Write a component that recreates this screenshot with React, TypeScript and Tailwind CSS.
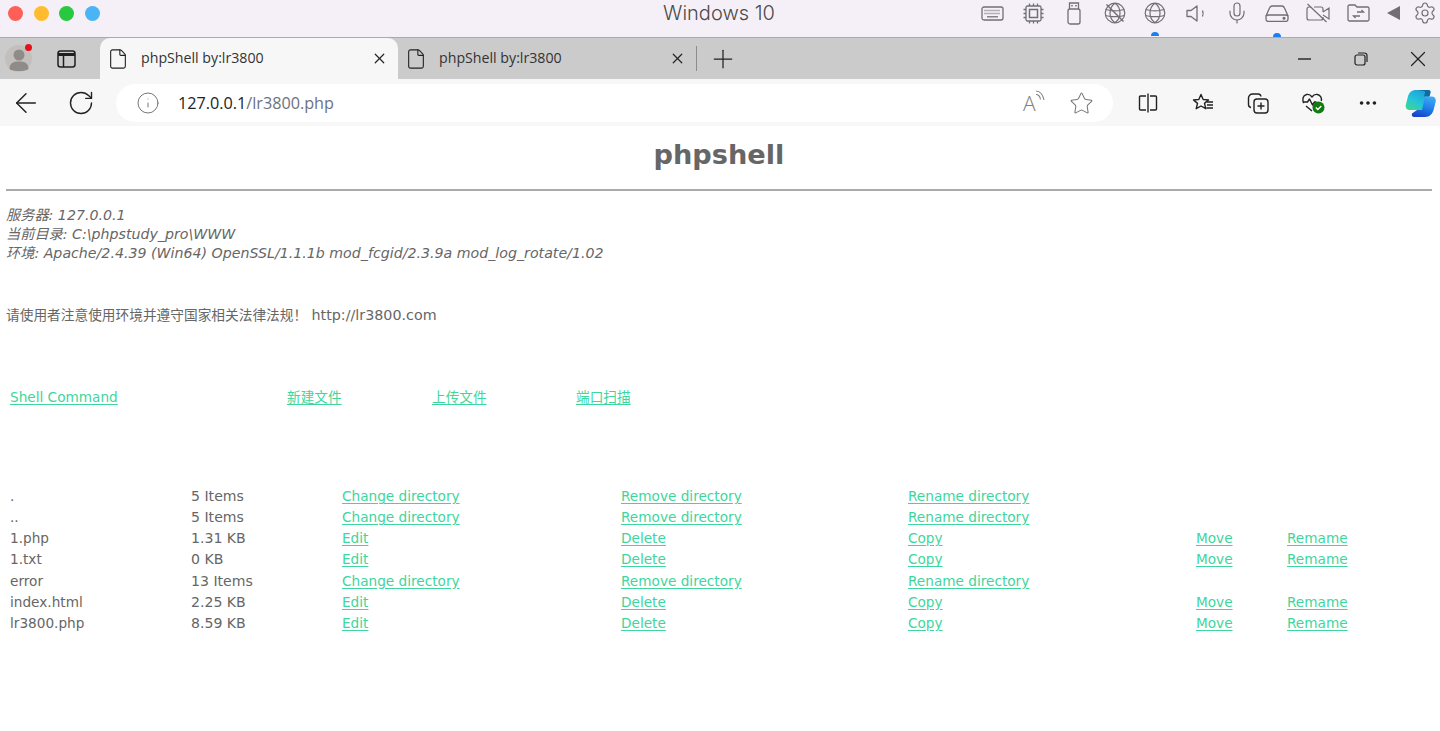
import {
  ArrowLeft,
  File,
  Info,
  Mic,
  MoreHorizontal,
  Plus,
  RotateCw,
  Settings,
  Star,
  X,
} from "lucide-react";

const pageFont = "font-['DejaVu_Sans','Noto_Sans_CJK_SC',sans-serif]";
const chromeFont = "font-['Open_Sans','Noto_Sans',sans-serif]";
const macGray = "#716e74";

type Row = { name: string; size: string; dir: boolean };

const rows: Row[] = [
  { name: ".", size: "5 Items", dir: true },
  { name: "..", size: "5 Items", dir: true },
  { name: "1.php", size: "1.31 KB", dir: false },
  { name: "1.txt", size: "0 KB", dir: false },
  { name: "error", size: "13 Items", dir: true },
  { name: "index.html", size: "2.25 KB", dir: false },
  { name: "lr3800.php", size: "8.59 KB", dir: false },
];

function Link({ children }: { children: React.ReactNode }) {
  return <a className="text-[#3ed69d] underline underline-offset-2">{children}</a>;
}

function KeyboardIcon() {
  return (
    <svg width="23" height="15" viewBox="0 0 23 15" fill="none" stroke={macGray} strokeWidth="1.300">
      <rect x="1" y="1" width="21" height="13" rx="2" />
      <path d="M3.500 4.500h16M3.500 7.500h16" strokeWidth="1.500" strokeDasharray="1 1" />
      <path d="M6 10.800h11" strokeWidth="1.300" />
    </svg>
  );
}

function CpuIcon() {
  return (
    <svg width="21" height="21" viewBox="0 0 21 21" fill="none" stroke={macGray} strokeWidth="1.300">
      <rect x="3" y="3" width="15" height="15" rx="1.500" />
      <rect x="6.500" y="6.500" width="8" height="8" strokeWidth="1.500" />
      <path d="M6.500 0.500v2.500M10.500 0.500v2.500M14.500 0.500v2.500M6.500 18v2.500M10.500 18v2.500M14.500 18v2.500M0.500 6.500h2.500M0.500 10.500h2.500M0.500 14.500h2.500M18 6.500h2.500M18 10.500h2.500M18 14.500h2.500" />
    </svg>
  );
}

function UsbStick() {
  return (
    <svg width="14" height="23" viewBox="0 0 14 23" fill="none" stroke={macGray} strokeWidth="1.300">
      <rect x="1" y="7" width="12" height="15" rx="2" />
      <path d="M2.500 7V1h9v6" />
      <path d="M5 3v1.500M9 3v1.500" strokeWidth="1.500" />
    </svg>
  );
}

function GlobeLines() {
  return (
    <>
      <circle cx="11" cy="11" r="9.800" />
      <path d="M11 1.200C7 4 6 8 6 11s1 7 5 9.800M11 1.200c4 2.800 5 6.800 5 9.800s-1 7-5 9.800M2 7.500c5 1.500 13 1.500 18 0M1.500 13.500c6 1.500 13 1.500 19 0" />
    </>
  );
}

function GlobeIcon({ off }: { off?: boolean }) {
  return (
    <svg width="22" height="22" viewBox="0 0 22 22" fill="none" stroke={macGray} strokeWidth="1.200">
      <GlobeLines />
      {off && <path d="M2.500 2.500l17 17" strokeWidth="1.500" />}
    </svg>
  );
}

function SpeakerIcon() {
  return (
    <svg width="19" height="17" viewBox="0 0 19 17" fill="none" stroke={macGray} strokeWidth="1.300" strokeLinejoin="round">
      <path d="M1 5.500h4L11 1v15l-6-4.500H1z" />
      <path d="M16.500 5.500c.8 2 .8 4 0 6" />
    </svg>
  );
}

function DriveIcon() {
  return (
    <svg width="24" height="17" viewBox="0 0 24 17" fill="none" stroke={macGray} strokeWidth="1.300">
      <path d="M1 11L4.500 3A3 3 0 0 1 7.300 1h9.400a3 3 0 0 1 2.800 2L23 11v3a2.500 2.500 0 0 1-2.500 2.500h-17A2.500 2.500 0 0 1 1 14z" />
      <path d="M1 11c1-1 1.500-1 2.500-1h17c1 0 1.500 0 2.500 1" />
      <circle cx="19" cy="13.300" r="0.900" fill={macGray} />
    </svg>
  );
}

function VideoOffIcon() {
  return (
    <svg width="24" height="20" viewBox="0 0 24 20" fill="none" stroke={macGray} strokeWidth="1.200">
      <path d="M5 4H3A2 2 0 0 0 1 6v9a2 2 0 0 0 2 2h12a2 2 0 0 0 2-2v-1M8 4h7a2 2 0 0 1 2 2v3M17 9l6-4v11l-6-4" />
      <path d="M1.500 1l19 18" />
    </svg>
  );
}

function TransferFolder() {
  return (
    <svg width="23" height="18" viewBox="0 0 23 18" fill="none" stroke={macGray} strokeWidth="1.300">
      <path d="M1 2.500A1.500 1.500 0 0 1 2.500 1H8l2 2h10.500A1.500 1.500 0 0 1 22 4.500V15.500a1.500 1.500 0 0 1-1.500 1.500h-18A1.500 1.500 0 0 1 1 15.500z" />
      <path d="M10 8h6.500l-2-2M13 12H6.500l2 2" />
    </svg>
  );
}

function SplitScreen() {
  return (
    <svg width="20" height="20" viewBox="0 0 20 20" fill="none" stroke="#222" strokeWidth="1.400">
      <path d="M8 3H2.500A1 1 0 0 0 1.500 4v12a1 1 0 0 0 1 1H8M12 3h5.500a1 1 0 0 1 1 1v12a1 1 0 0 1-1 1H12M10 0.500v19" />
    </svg>
  );
}

function Favorites() {
  return (
    <svg width="22" height="20" viewBox="0 0 22 20" fill="none" stroke="#222" strokeWidth="1.400" strokeLinejoin="round">
      <path d="M9 1.500l2.200 5 5.300.4-4 3.500 1.300 5.300L9 13l-4.800 2.700 1.300-5.300-4-3.500 5.300-.4z" />
      <path d="M15 9h6M15 12h6M14.500 15h6.500" />
    </svg>
  );
}

function Collections() {
  return (
    <svg width="22" height="22" viewBox="0 0 22 22" fill="none" stroke="#222" strokeWidth="1.400">
      <rect x="7" y="7" width="14" height="14" rx="3" />
      <path d="M14 10.500v7M10.500 14h7" />
      <path d="M4 15.500A3 3 0 0 1 1.500 12.500V6A4 4 0 0 1 5.500 2h5.500A3 3 0 0 1 14 4.500" />
    </svg>
  );
}

function HealthBadge() {
  return (
    <svg width="24" height="22" viewBox="0 0 24 22" fill="none">
      <path
        d="M3 11C1 8 1.500 3.500 5.500 2.500 8 2 10 3.500 11 5c1-1.500 3-3 5.500-2.500 3 .6 4.500 3.500 3.800 6.500M1.500 10h5l2-3 3 6 2-3h2M5 14l6 5"
        stroke="#222"
        strokeWidth="1.400"
        strokeLinejoin="round"
      />
      <circle cx="17.500" cy="15.500" r="6" fill="#107c10" />
      <path d="M14.800 15.500l2 2 3.500-3.500" stroke="#fff" strokeWidth="1.400" />
    </svg>
  );
}

function CopilotLogo() {
  return (
    <svg width="31" height="29" viewBox="0 0 31 29">
      <defs>
        <linearGradient id="copilotA" x1="0.800" y1="0" x2="0.100" y2="1">
          <stop offset="0" stopColor="#1c9bd8" />
          <stop offset="0.550" stopColor="#25c3d8" />
          <stop offset="1" stopColor="#3ed98f" />
        </linearGradient>
        <linearGradient id="copilotB" x1="0.700" y1="0" x2="0.300" y2="1">
          <stop offset="0" stopColor="#3fa9f5" />
          <stop offset="0.500" stopColor="#1f7fe8" />
          <stop offset="1" stopColor="#1742c8" />
        </linearGradient>
      </defs>
      <path d="M11 1h12c2 0 2.500 2 2 3.500L20 21H5c-3 0-4.800-2-4.200-5l2-8C3.800 3.500 7 1 11 1z" fill="url(#copilotA)" />
      <path d="M13 1h10c2.500 0 3 1.500 2.500 3L24.500 7.500H19L20 4c.3-1.500-.3-2-1.500-2z" fill="#0f6d9e" />
      <path d="M20 7.500h6.500c3 0 4.800 2 4.200 5l-2 8c-1 4-4 7.500-8.700 7.500H9c-2 0-2.500-2-2-3.500L12 21h5z" fill="url(#copilotB)" />
    </svg>
  );
}

function Tab({ active }: { active: boolean }) {
  return (
    <div
      className={`flex h-full w-[298px] shrink-0 items-center rounded-t-[10px] pl-[7px] ${active ? "bg-[#f7f7f7]" : ""}`}
    >
      <File size={22} strokeWidth={1.200} color="#222" />
      <span className={`ml-[12px] mb-[1px] text-[14.200px] text-[#333] ${chromeFont}`}>phpShell by:lr3800</span>
      <X size={17} strokeWidth={1.700} color="#222" className="ml-auto mr-[10px]" />
    </div>
  );
}

function MacBar() {
  return (
    <div className="grid h-[38px] grid-cols-[1fr_auto_1fr] items-center border-b border-[#aaa9ab] bg-[#f5f0f8] pb-[11px]">
      <div className="flex gap-[10.500px] pl-[8px]">
        <span className="h-[15px] w-[15px] rounded-full bg-[#fe5f57]" />
        <span className="h-[15px] w-[15px] rounded-full bg-[#febc2e]" />
        <span className="h-[15px] w-[15px] rounded-full bg-[#28c840]" />
        <span className="h-[15px] w-[15px] rounded-full bg-[#4ab4f5]" />
      </div>
      <span className="pr-[2px] text-[20px] font-light leading-none text-[#4a4a4a] font-['Inter',sans-serif]">
        Windows 10
      </span>
      <div className="flex items-center justify-end">
        <div className="flex w-[40.700px] justify-center"><KeyboardIcon /></div>
        <div className="flex w-[40.700px] justify-center"><CpuIcon /></div>
        <div className="flex w-[40.700px] justify-center"><UsbStick /></div>
        <div className="flex w-[40.700px] justify-center"><GlobeIcon off /></div>
        <div className="relative flex w-[40.700px] justify-center">
          <GlobeIcon />
          <span className="absolute left-[16.500px] top-[30px] h-[4px] w-[8px] rounded-t-full bg-[#1a7ff0]" />
        </div>
        <div className="flex w-[40.700px] justify-center"><SpeakerIcon /></div>
        <div className="flex w-[40.700px] justify-center">
          <Mic size={24} strokeWidth={1.200} color={macGray} />
        </div>
        <div className="relative flex w-[40.700px] justify-center">
          <DriveIcon />
          <span className="absolute left-[16.500px] top-[28px] h-[4px] w-[8px] rounded-t-full bg-[#1a7ff0]" />
        </div>
        <div className="flex w-[40.700px] justify-center"><VideoOffIcon /></div>
        <div className="flex w-[40.700px] justify-center"><TransferFolder /></div>
        <div className="flex w-[30px] justify-center pr-[2px]">
          <span className="h-0 w-0 border-y-[7px] border-r-[13px] border-y-transparent border-r-[#716e74]" />
        </div>
        <div className="flex w-[31px] justify-center">
          <Settings size={24} strokeWidth={1.200} color={macGray} />
        </div>
      </div>
    </div>
  );
}

function TabStrip() {
  return (
    <div className="flex h-[41px] items-stretch bg-[#cbcbcb]">
      <div className="flex w-[100px] shrink-0 items-center pl-[5px]">
        <div className="relative flex h-[27px] w-[27px] items-center justify-center rounded-full bg-[#c2bfbd]">
          <svg width="22" height="24" viewBox="0 0 22 24" fill="#8f8b88">
            <circle cx="11" cy="8" r="5.500" />
            <path d="M1.500 22c0-6 4-7.500 9.500-7.500s9.500 1.500 9.500 7.500c-2 1.500-5 2-9.500 2s-7.500-.5-9.500-2z" />
          </svg>
          <span className="absolute right-[0px] top-[-1px] h-[7px] w-[7px] rounded-full bg-[#e8101c]" />
        </div>
        <svg className="ml-[25px]" width="19" height="18" viewBox="0 0 19 18" fill="none" stroke="#1f1f1f" strokeWidth="1.500">
          <rect x="1" y="1" width="17" height="16" rx="2.500" />
          <path d="M1 4.500h17" strokeWidth="3" />
          <path d="M6.500 5v12" />
        </svg>
      </div>
      <Tab active />
      <Tab active={false} />
      <div className="flex items-center">
        <span className="h-[25px] w-px bg-[#8d8d8d]" />
        <Plus size={30} strokeWidth={1} color="#222" className="ml-[11px]" />
      </div>
      <div className="ml-auto flex items-center gap-[37px] pr-[9px]">
        <svg className="mr-[6px]" width="13" height="2" viewBox="0 0 13 2" stroke="#222" strokeWidth="1.400">
          <path d="M0 1h13" />
        </svg>
        <svg width="14" height="14" viewBox="0 0 14 14" fill="none" stroke="#222" strokeWidth="1.200">
          <rect x="1" y="3" width="10" height="10" rx="2" />
          <path d="M4 1h6.500A2.500 2.500 0 0 1 13 3.500V10" />
        </svg>
        <X size={26} strokeWidth={1.100} color="#222" />
      </div>
    </div>
  );
}

function Toolbar() {
  return (
    <div className="flex h-[47px] items-center bg-[#f7f7f7] pt-[1px] pl-[10px]">
      <ArrowLeft size={32} strokeWidth={1.100} color="#222" />
      <RotateCw size={28} strokeWidth={1.200} color="#222" className="ml-[25px]" />
      <div className={`ml-[21px] flex h-[38px] w-[997px] shrink-0 items-center rounded-full bg-white pl-[20px] pr-[19px] ${chromeFont}`}>
        <Info size={24} strokeWidth={1} color="#777" />
        <span className="ml-[18px] text-[16.200px] text-[#222]">
          127.0.0.1<span className="text-[#6b7280]">/lr3800.php</span>
        </span>
        <span className="relative ml-auto w-[14px] text-[21px] font-light leading-none text-[#808080]">
          A
          <svg className="absolute left-[12px] top-[-3px]" width="10" height="11" viewBox="0 0 10 11" fill="none" stroke="#808080" strokeWidth="1.100">
            <path d="M1 1c4 0 7 4 8 9M1 4.500c2.500 0 4 2 4.500 5" />
          </svg>
        </span>
        <Star size={25} strokeWidth={1} color="#777" className="ml-[32px]" />
      </div>
      <div className="ml-[7px] flex items-center">
        <div className="flex w-[55px] justify-center"><SplitScreen /></div>
        <div className="flex w-[55px] justify-center"><Favorites /></div>
        <div className="flex w-[55px] justify-center"><Collections /></div>
        <div className="flex w-[55px] justify-center"><HealthBadge /></div>
        <div className="flex w-[55px] justify-center">
          <MoreHorizontal size={22} strokeWidth={2} color="#222" />
        </div>
      </div>
      <div className="ml-[10px]">
        <CopilotLogo />
      </div>
    </div>
  );
}

export default function App() {
  return (
    <div className={`h-[731px] overflow-hidden bg-white ${pageFont}`}>
      <MacBar />
      <TabStrip />
      <Toolbar />
      <main className="rounded-t-[6px] bg-white text-[13.650px] leading-[19px] text-[#666]">
        <h1 className="pt-[12px] pr-[2px] text-center text-[27.200px] font-bold leading-[34px]">phpshell</h1>
        <hr className="ml-[6px] mr-[8px] mt-[17px] border-t-2 border-[#aaaaaa]" />
        <div className="ml-[6px] mt-[15px] text-[14.200px] italic">
          <div>服务器: 127.0.0.1</div>
          <div>当前目录: C:\phpstudy_pro\WWW</div>
          <div>环境: Apache/2.4.39 (Win64) OpenSSL/1.1.1b mod_fcgid/2.3.9a mod_log_rotate/1.02</div>
        </div>
        <p className="ml-[6px] mt-[43px] text-[13.700px]">
          请使用者注意使用环境并遵守国家相关法律法规！ <span className="text-[14.300px]">http://lr3800.com</span>
        </p>
        <div className="mt-[63px] grid grid-cols-[277px_145px_144px_auto] pl-[10px]">
          <Link>Shell Command</Link>
          <Link>新建文件</Link>
          <Link>上传文件</Link>
          <Link>端口扫描</Link>
        </div>
        <div className="mt-[80px] grid auto-rows-[21.140px] grid-cols-[181px_151px_279px_287px_288px_91px_auto] pl-[10px]">
          {rows.map((r) => (
            <div key={r.name} className="contents">
              <div>{r.name}</div>
              <div className="text-[14.100px]">{r.size}</div>
              <div>
                <Link>{r.dir ? "Change directory" : "Edit"}</Link>
              </div>
              <div>
                <Link>{r.dir ? "Remove directory" : "Delete"}</Link>
              </div>
              <div>
                <Link>{r.dir ? "Rename directory" : "Copy"}</Link>
              </div>
              <div>{!r.dir && <Link>Move</Link>}</div>
              <div>{!r.dir && <Link>Remame</Link>}</div>
            </div>
          ))}
        </div>
      </main>
    </div>
  );
}
